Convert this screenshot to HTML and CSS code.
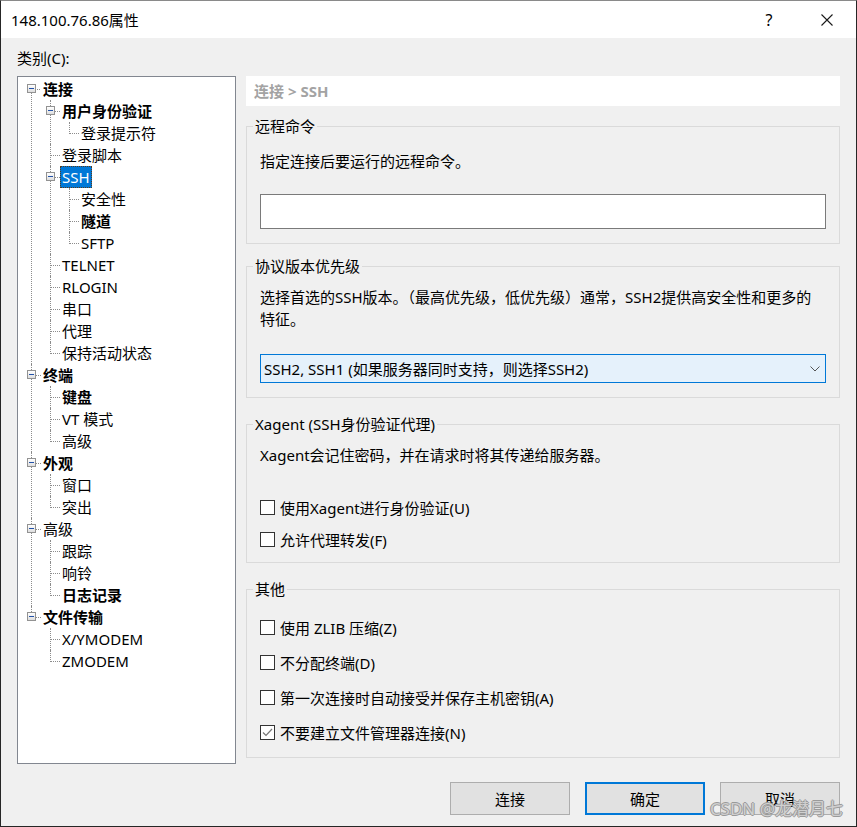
FILE: index.html
```html
<!DOCTYPE html>
<html lang="zh-CN">
<head>
    <meta charset="UTF-8">
    <title>148.100.76.86属性</title>
    <link rel="stylesheet" href="styles.css">
</head>
<body>
    <div class="window">
        <div class="titlebar">
            <div class="title">148.100.76.86属性</div>
            <div class="tb-btn help">?</div>
            <div class="tb-btn close">
                <svg width="12" height="12" viewBox="0 0 12 12"><path d="M0.5 0.5 L11.5 11.5 M11.5 0.5 L0.5 11.5" stroke="#1a1a1a" stroke-width="1.1" fill="none"/></svg>
            </div>
        </div>

        <div class="content">
            <div class="cat-label">类别(C):</div>

            <div class="main">
                <div class="tree">
                    <ul class="root">
                        <li><span class="exp"></span><span class="label b">连接</span>
                            <ul>
                                <li><span class="exp"></span><span class="label b">用户身份验证</span>
                                    <ul>
                                        <li><span class="label">登录提示符</span></li>
                                    </ul>
                                </li>
                                <li><span class="label">登录脚本</span></li>
                                <li><span class="exp"></span><span class="label sel">SSH</span>
                                    <ul>
                                        <li><span class="label">安全性</span></li>
                                        <li><span class="label b">隧道</span></li>
                                        <li><span class="label">SFTP</span></li>
                                    </ul>
                                </li>
                                <li><span class="label">TELNET</span></li>
                                <li><span class="label">RLOGIN</span></li>
                                <li><span class="label">串口</span></li>
                                <li><span class="label">代理</span></li>
                                <li><span class="label">保持活动状态</span></li>
                            </ul>
                        </li>
                        <li><span class="exp"></span><span class="label b">终端</span>
                            <ul>
                                <li><span class="label b">键盘</span></li>
                                <li><span class="label">VT 模式</span></li>
                                <li><span class="label">高级</span></li>
                            </ul>
                        </li>
                        <li><span class="exp"></span><span class="label b">外观</span>
                            <ul>
                                <li><span class="label">窗口</span></li>
                                <li><span class="label">突出</span></li>
                            </ul>
                        </li>
                        <li><span class="exp"></span><span class="label">高级</span>
                            <ul>
                                <li><span class="label">跟踪</span></li>
                                <li><span class="label">响铃</span></li>
                                <li><span class="label b">日志记录</span></li>
                            </ul>
                        </li>
                        <li><span class="exp"></span><span class="label b">文件传输</span>
                            <ul>
                                <li><span class="label">X/YMODEM</span></li>
                                <li><span class="label">ZMODEM</span></li>
                            </ul>
                        </li>
                    </ul>
                </div>

                <div class="panel">
                    <div class="crumb">连接 &gt; SSH</div>

                    <fieldset class="group g-remote">
                        <legend>远程命令</legend>
                        <p class="desc">指定连接后要运行的远程命令。</p>
                        <div class="textbox"></div>
                    </fieldset>

                    <fieldset class="group g-proto">
                        <legend>协议版本优先级</legend>
                        <p class="desc">选择首选的SSH版本。（最高优先级，低优先级）通常，SSH2提供高安全性和更多的<br>特征。</p>
                        <div class="select">
                            <span>SSH2, SSH1 (如果服务器同时支持，则选择SSH2)</span>
                            <svg width="10" height="6" viewBox="0 0 10 6"><path d="M0.5 0.5 L5 5 L9.5 0.5" stroke="#555" stroke-width="1" fill="none"/></svg>
                        </div>
                    </fieldset>

                    <fieldset class="group g-xagent">
                        <legend>Xagent (SSH身份验证代理)</legend>
                        <p class="desc">Xagent会记住密码，并在请求时将其传递给服务器。</p>
                        <div class="checks">
                            <div class="check"><span class="box"></span>使用Xagent进行身份验证(U)</div>
                            <div class="check"><span class="box"></span>允许代理转发(F)</div>
                        </div>
                    </fieldset>

                    <fieldset class="group g-other">
                        <legend>其他</legend>
                        <div class="checks">
                            <div class="check"><span class="box"></span>使用 ZLIB 压缩(Z)</div>
                            <div class="check"><span class="box"></span>不分配终端(D)</div>
                            <div class="check"><span class="box"></span>第一次连接时自动接受并保存主机密钥(A)</div>
                            <div class="check"><span class="box checked"><svg width="11" height="9" viewBox="0 0 11 9"><path d="M1 4.5 L4 7.5 L10 1" stroke="#777" stroke-width="1.2" fill="none"/></svg></span>不要建立文件管理器连接(N)</div>
                        </div>
                    </fieldset>
                </div>
            </div>

            <div class="buttons">
                <button class="btn">连接</button>
                <button class="btn default">确定</button>
                <button class="btn">取消</button>
            </div>
        </div>

        <div class="watermark">CSDN @龙潜月七</div>
    </div>
</body>
</html>
```

FILE: styles.css
```css
html, body {
    margin: 0;
    padding: 0;
}
body {
    font-family: "Noto Sans", "Noto Sans CJK SC", sans-serif;
    font-size: 15px;
    color: #000;
    background: #f0f0f0;
}
.window {
    position: relative;
    width: 857px;
    height: 827px;
    box-sizing: border-box;
    border: 1px solid #262626;
    border-top-color: #8a8a8a;
    background: #f0f0f0;
    display: flex;
    flex-direction: column;
}

/* title bar */
.titlebar {
    height: 37px;
    background: #fff;
    display: flex;
    align-items: center;
}
.title {
    flex: 1;
    padding-left: 10px;
    font-size: 15px;
}
.tb-btn {
    width: 58px;
    height: 37px;
    display: flex;
    align-items: center;
    justify-content: center;
    font-size: 16px;
}

.content {
    flex: 1;
    padding: 10px 16px 11px 16px;
    display: flex;
    flex-direction: column;
}
.cat-label {
    height: 20px;
    line-height: 20px;
    margin-bottom: 8px;
}
.main {
    display: flex;
    align-items: flex-start;
    gap: 10px;
}

/* tree */
.tree {
    width: 219px;
    height: 688px;
    box-sizing: border-box;
    border: 1px solid #828790;
    background: #fff;
    padding-top: 1px;
}
.tree ul {
    list-style: none;
    margin: 0;
    padding: 0 0 0 19px;
}
.tree ul.root {
    padding-left: 13px;
}
.tree li {
    position: relative;
    line-height: 22px;
}
.tree li::before {
    content: '';
    position: absolute;
    left: 0;
    top: 0;
    width: 9px;
    height: 11px;
    border-left: 1px dotted #8c8c8c;
    border-bottom: 1px dotted #8c8c8c;
}
.tree ul.root > li:first-child::before {
    border-left: none;
    top: 0;
}
.tree li:not(:last-child)::after {
    content: '';
    position: absolute;
    left: 0;
    top: 11px;
    bottom: 0;
    border-left: 1px dotted #8c8c8c;
}
.exp {
    position: absolute;
    left: -4px;
    top: 6px;
    width: 9px;
    height: 9px;
    box-sizing: border-box;
    border: 1px solid #929292;
    background: linear-gradient(#ffffff, #dedede);
    z-index: 1;
}
.exp::after {
    content: '';
    position: absolute;
    left: 1px;
    top: 3px;
    width: 5px;
    height: 1px;
    background: #2352a8;
}
.label {
    display: inline-block;
    height: 22px;
    margin-left: 12px;
    white-space: nowrap;
}
.label.b {
    font-weight: bold;
}
.label.sel {
    margin-left: 10px;
    padding: 0 2px;
    background: #0078d7;
    color: #fff;
    outline: 1px dotted #5a3a1a;
    outline-offset: -1px;
}

/* right panel */
.panel {
    flex: 1;
    display: flex;
    flex-direction: column;
}
.crumb {
    height: 30px;
    line-height: 30px;
    background: #fff;
    padding-left: 8px;
    color: #a3a3a3;
    font-weight: bold;
}
.group {
    margin: 0;
    border: 1px solid #dadada;
    padding: 0 13px;
    min-width: 0;
}
.group legend {
    margin-left: -7px;
    padding: 0 2px;
    line-height: 20px;
    height: 20px;
}
.desc {
    margin: 0;
    line-height: 22px;
}
.g-remote {
    margin-top: 10px;
    padding-top: 14px;
    padding-bottom: 14px;
}
.g-proto {
    margin-top: 12px;
    padding-top: 10px;
    padding-bottom: 14px;
}
.g-xagent {
    margin-top: 16px;
    padding-top: 10px;
    padding-bottom: 12px;
}
.g-other {
    margin-top: 16px;
    padding-top: 17px;
    padding-bottom: 14px;
}
.textbox {
    margin-top: 22px;
    height: 35px;
    box-sizing: border-box;
    border: 1px solid #7a7a7a;
    background: #fff;
}
.select {
    margin-top: 24px;
    height: 29px;
    box-sizing: border-box;
    border: 1px solid #0078d7;
    background: #e5f1fb;
    display: flex;
    align-items: center;
    justify-content: space-between;
    padding: 0 5px 0 3px;
}
.checks {
    display: flex;
    flex-direction: column;
}
.g-xagent .checks {
    margin-top: 30px;
    gap: 10px;
}
.g-other .checks {
    gap: 13px;
}
.check {
    display: flex;
    align-items: center;
    height: 22px;
    white-space: nowrap;
}
.box {
    width: 15px;
    height: 15px;
    box-sizing: border-box;
    border: 1px solid #333;
    background: #fff;
    margin-right: 5px;
    display: flex;
    align-items: center;
    justify-content: center;
}

/* buttons */
.buttons {
    margin-top: 18px;
    display: flex;
    justify-content: flex-end;
    gap: 15px;
}
.btn {
    width: 120px;
    height: 33px;
    box-sizing: border-box;
    border: 1px solid #adadad;
    background: #e1e1e1;
    font-family: "Noto Sans", "Noto Sans CJK SC", sans-serif;
    font-size: 15px;
    color: #000;
    padding: 0;
}
.btn.default {
    border: 2px solid #0078d7;
}

.watermark {
    position: absolute;
    right: 13px;
    bottom: 6px;
    font-size: 17px;
    color: rgba(255, 255, 255, 0.55);
    text-shadow: -1px 0 #9a9a9a, 1px 0 #9a9a9a, 0 -1px #9a9a9a, 0 1px #9a9a9a;
    font-family: "Noto Sans", "Noto Sans CJK SC", sans-serif;
}
```
